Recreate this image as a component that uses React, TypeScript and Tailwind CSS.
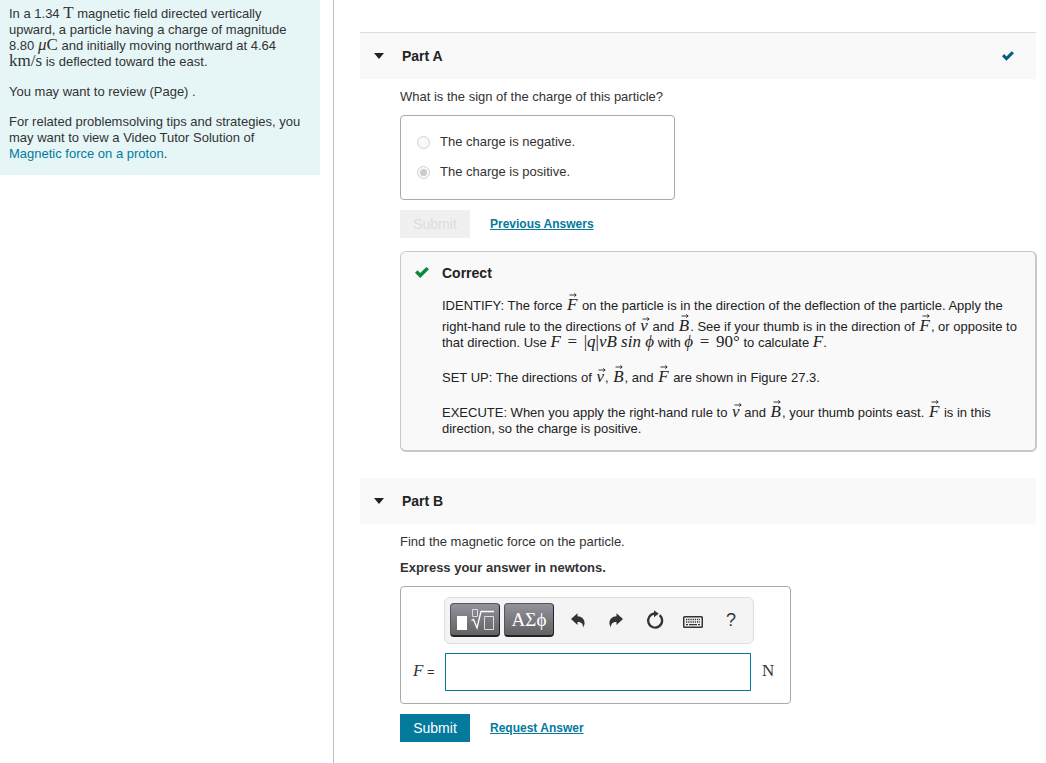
import { useState } from "react";
import type { ReactNode } from "react";

const M = ({ children, upright }: { children: ReactNode; upright?: boolean }) => (
  <span
    className={`font-['Liberation_Serif',serif] text-[17px] leading-[13px] ${
      upright ? "" : "italic"
    }`}
  >
    {children}
  </span>
);

const Eq = () => (
  <span className="mx-[3px]">
    <M upright>=</M>
  </span>
);

// letter with a vector arrow on top
const Vec = ({ children }: { children: string }) => {
  const small = children === "v";
  return (
    <span
      className={`relative mx-px inline-block font-['Liberation_Serif',serif] text-[17px] italic ${
        small ? "leading-[13px]" : "pt-[3px] leading-[17px]"
      }`}
    >
      {children}
      <svg
        viewBox="0 0 8 4"
        className={`absolute left-0.5 h-1 w-2 ${small ? "-top-0.5" : "top-0"}`}
        fill="none"
        stroke="currentColor"
        strokeWidth="0.9"
        aria-hidden="true"
      >
        <path d="M0.5 2h6.5M5.3 0.4L7.2 2L5.3 3.6" />
      </svg>
    </span>
  );
};

const Check = ({ className }: { className: string }) => (
  <svg viewBox="0 0 14 11" className={className} fill="currentColor" aria-hidden="true">
    <path d="M0 5.8L2.5 3.3L5.2 6L11.4 0L14 2.3L5.2 11z" />
  </svg>
);

const PartHeader = ({
  title,
  open,
  done,
  onToggle,
}: {
  title: string;
  open: boolean;
  done?: boolean;
  onToggle: () => void;
}) => (
  <div
    className={`mr-2.5 flex items-center justify-between bg-[#f9f9f9] pr-[22px] pl-3.5 ${
      done ? "border-t border-[#dcdcdc]" : ""
    }`}
  >
    <button
      type="button"
      aria-expanded={open}
      onClick={onToggle}
      className="flex h-[46px] items-center gap-[18px] text-sm font-bold text-[#222]"
    >
      <svg viewBox="0 0 10 6" className={`h-1.5 w-2.5 ${open ? "" : "-rotate-90"}`} aria-hidden="true">
        <path d="M0 0h10L5 6z" fill="#222" />
      </svg>
      {title}
    </button>
    {done && <Check className="h-2.5 w-3 text-[#005f7f]" />}
  </div>
);

const Problem = () => (
  <section className="flex w-80 flex-col gap-3.5 bg-[#e6f6f7] pt-1.5 pr-3 pb-[13px] pl-[9px]">
    <p>
      In a 1.34 <M upright>T</M> magnetic field directed vertically upward, a particle having a
      charge of magnitude 8.80 <M>μ</M>
      <M upright>C</M> and initially moving northward at 4.64 <M upright>km/s</M> is deflected
      toward the east.
    </p>
    <p>You may want to review (Page) .</p>
    <p>
      For related problemsolving tips and strategies, you may want to view a Video Tutor Solution of{" "}
      <a href="#video" className="text-[#047a9c]">
        Magnetic force on a proton
      </a>
      .
    </p>
  </section>
);

const Feedback = () => (
  <section className="flex gap-[13px] rounded-md border border-[#c8c8c8] border-r-2 border-b-2 bg-[#f9f9f9] pt-[13px] pr-3 pb-[13px] pl-3.5 text-[#222]">
    <Check className="mt-0.5 h-[11px] w-3.5 shrink-0 text-[#0b8a3e]" />
    <div>
      <h3 className="text-sm leading-4 font-bold">Correct</h3>
      <div className="mt-3 flex flex-col gap-3.5">
        <p>
          IDENTIFY: The force <Vec>F</Vec> on the particle is in the direction of the deflection of
          the particle. Apply the right-hand rule to the directions of <Vec>v</Vec> and{" "}
          <Vec>B</Vec>. See if your thumb is in the direction of <Vec>F</Vec>, or opposite to that
          direction. Use <M>F</M> <Eq /> <M upright>|</M>
          <M>q</M>
          <M upright>|</M>
          <M>vB sin ϕ</M> with <M>ϕ</M> <Eq /> <M upright>90°</M> to calculate <M>F</M>.
        </p>
        <p>
          SET UP: The directions of <Vec>v</Vec>, <Vec>B</Vec>, and <Vec>F</Vec> are shown in Figure
          27.3.
        </p>
        <p>
          EXECUTE: When you apply the right-hand rule to <Vec>v</Vec> and <Vec>B</Vec>, your thumb
          points east. <Vec>F</Vec> is in this direction, so the charge is positive.
        </p>
      </div>
    </div>
  </section>
);

const PartA = () => (
  <div className="flex flex-col items-start pt-2.5 pl-10">
    <p id="sign-question">What is the sign of the charge of this particle?</p>
    <div
      role="radiogroup"
      aria-labelledby="sign-question"
      className="mt-2.5 flex w-[275px] flex-col gap-3.5 rounded border border-[#a9a9a9] px-4 pt-[18px] pb-[19px]"
    >
      {["The charge is negative.", "The charge is positive."].map((label) => (
        <label key={label} className="flex items-center gap-2.5">
          <input
            type="radio"
            name="sign"
            disabled
            defaultChecked={label.includes("positive")}
            className="h-[13px] w-[13px] appearance-none rounded-full border border-[#d0d0d0] bg-[#f9f9f9] p-0.5 before:block before:h-full before:rounded-full checked:before:bg-[#cbcbcb]"
          />
          {label}
        </label>
      ))}
    </div>
    <div className="mt-2.5 flex items-center gap-5">
      <button type="button" disabled className="h-7 w-[70px] bg-[#f0f0f0] text-sm text-[#dcdcdc]">
        Submit
      </button>
      <a href="#previous" className="text-xs font-bold text-[#047a9c] underline">
        Previous Answers
      </a>
    </div>
    <div className="mt-[13px] mr-[9px] self-stretch">
      <Feedback />
    </div>
  </div>
);

const paletteButton =
  "flex h-[34px] w-[50px] items-center justify-center rounded border border-[#55555a] border-r-[#222] border-b-2 border-b-[#222] bg-linear-to-b from-[#94929c] to-[#626264] text-white";

const Toolbar = () => (
  <div
    role="toolbar"
    className="flex h-[47px] items-center rounded-md border border-[#dedede] bg-[#f4f4f4] pb-px pl-[5px] text-[#333]"
  >
    <button type="button" aria-label="Templates" className={paletteButton}>
      <svg viewBox="0 0 38 22" className="h-[22px] w-[38px]" fill="none" stroke="#fff">
        <path d="M1 7h10v14H1z" fill="#fff" stroke="none" />
        <path d="M16.5 0.5h5v7h-5zM28.5 7.5h9v13h-9z" strokeWidth="1" stroke="#ddd" />
        <path d="M15.5 11.5l2-1l3.5 8.5L25 2.5h13" strokeWidth="1.3" />
      </svg>
    </button>
    <button
      type="button"
      aria-label="Symbols"
      className={`ml-1 font-['Liberation_Serif',serif] text-[19px] ${paletteButton}`}
    >
      ΑΣϕ
    </button>
    <button type="button" aria-label="Undo" className="ml-[17px]">
      <svg viewBox="0 0 14 15" className="h-[15px] w-3.5" fill="currentColor">
        <path d="M0 6L6.5 0.3v3C11.5 3.6 14.3 7 13.4 11.6L12 14.8C12.3 11 10.6 9 6.5 9v3z" />
      </svg>
    </button>
    <button type="button" aria-label="Redo" className="ml-6">
      <svg viewBox="0 0 14 15" className="h-[15px] w-3.5" fill="currentColor">
        <path d="M14 6L7.5 0.3v3C2.5 3.6-0.3 7 0.6 11.6L2 14.8C1.7 11 3.4 9 7.5 9v3z" />
      </svg>
    </button>
    <button type="button" aria-label="Reset" className="ml-[23px]">
      <svg viewBox="0 0 18 20" className="h-5 w-[18px]" fill="none" stroke="currentColor">
        <path d="M13.6 5.2A7 7 0 1 1 8.5 3.6" strokeWidth="2.3" />
        <path d="M8 0.3L12.8 3.7L8 7.2z" fill="currentColor" stroke="none" />
      </svg>
    </button>
    <button type="button" aria-label="Keyboard" className="mt-1 ml-[19px]">
      <svg viewBox="0 0 20 12" className="h-3 w-5" fill="none" stroke="currentColor">
        <rect x="0.75" y="0.75" width="18.5" height="10.5" rx="0.8" strokeWidth="1.5" />
        <path d="M3 3.5h14M3 6h14" strokeWidth="1.3" strokeDasharray="1.3 0.9" />
        <path d="M3 8.7h2M6 8.7h8M15 8.7h2" strokeWidth="1.3" />
      </svg>
    </button>
    <button type="button" aria-label="Help" className="ml-[23px] text-lg leading-5">
      ?
    </button>
  </div>
);

const PartB = () => {
  const [answer, setAnswer] = useState("");

  return (
    <div className="flex flex-col items-start pt-2.5 pl-10">
      <p>Find the magnetic force on the particle.</p>
      <p className="mt-2.5 font-bold">Express your answer in newtons.</p>
      <div className="mt-2.5 w-[391px] rounded border border-[#a9a9a9] pt-2.5 pb-3">
        <div className="mr-9 ml-[43px]">
          <Toolbar />
        </div>
        <div className="mt-[9px] flex items-center pl-3">
          <label htmlFor="force" className="w-8 shrink-0">
            <M>F</M> =
          </label>
          <input
            id="force"
            type="text"
            value={answer}
            onChange={(e) => setAnswer(e.target.value)}
            className="h-[38px] w-[306px] border border-[#047a9c] px-2 text-base outline-none"
          />
          <span className="ml-[11px]">
            <M upright>N</M>
          </span>
        </div>
      </div>
      <div className="mt-2.5 flex items-center gap-5">
        <button type="button" className="h-7 w-[70px] bg-[#047a9c] text-sm text-white">
          Submit
        </button>
        <a href="#request" className="text-xs font-bold text-[#047a9c] underline">
          Request Answer
        </a>
      </div>
    </div>
  );
};

const App = () => {
  const [openA, setOpenA] = useState(true);
  const [openB, setOpenB] = useState(true);

  return (
    <div className="flex min-h-screen bg-white font-['Liberation_Sans',Arial,sans-serif] text-[13px] leading-4 text-[#333]">
      <aside className="w-[334px] shrink-0 border-r border-[#b8bfca]">
        <Problem />
      </aside>
      <main className="min-w-0 flex-1 pt-8 pl-[26px]">
        <PartHeader title="Part A" open={openA} done onToggle={() => setOpenA(!openA)} />
        {openA && <PartA />}
        <div className="mt-[26px]">
          <PartHeader title="Part B" open={openB} onToggle={() => setOpenB(!openB)} />
        </div>
        {openB && <PartB />}
      </main>
    </div>
  );
};

export default App;
